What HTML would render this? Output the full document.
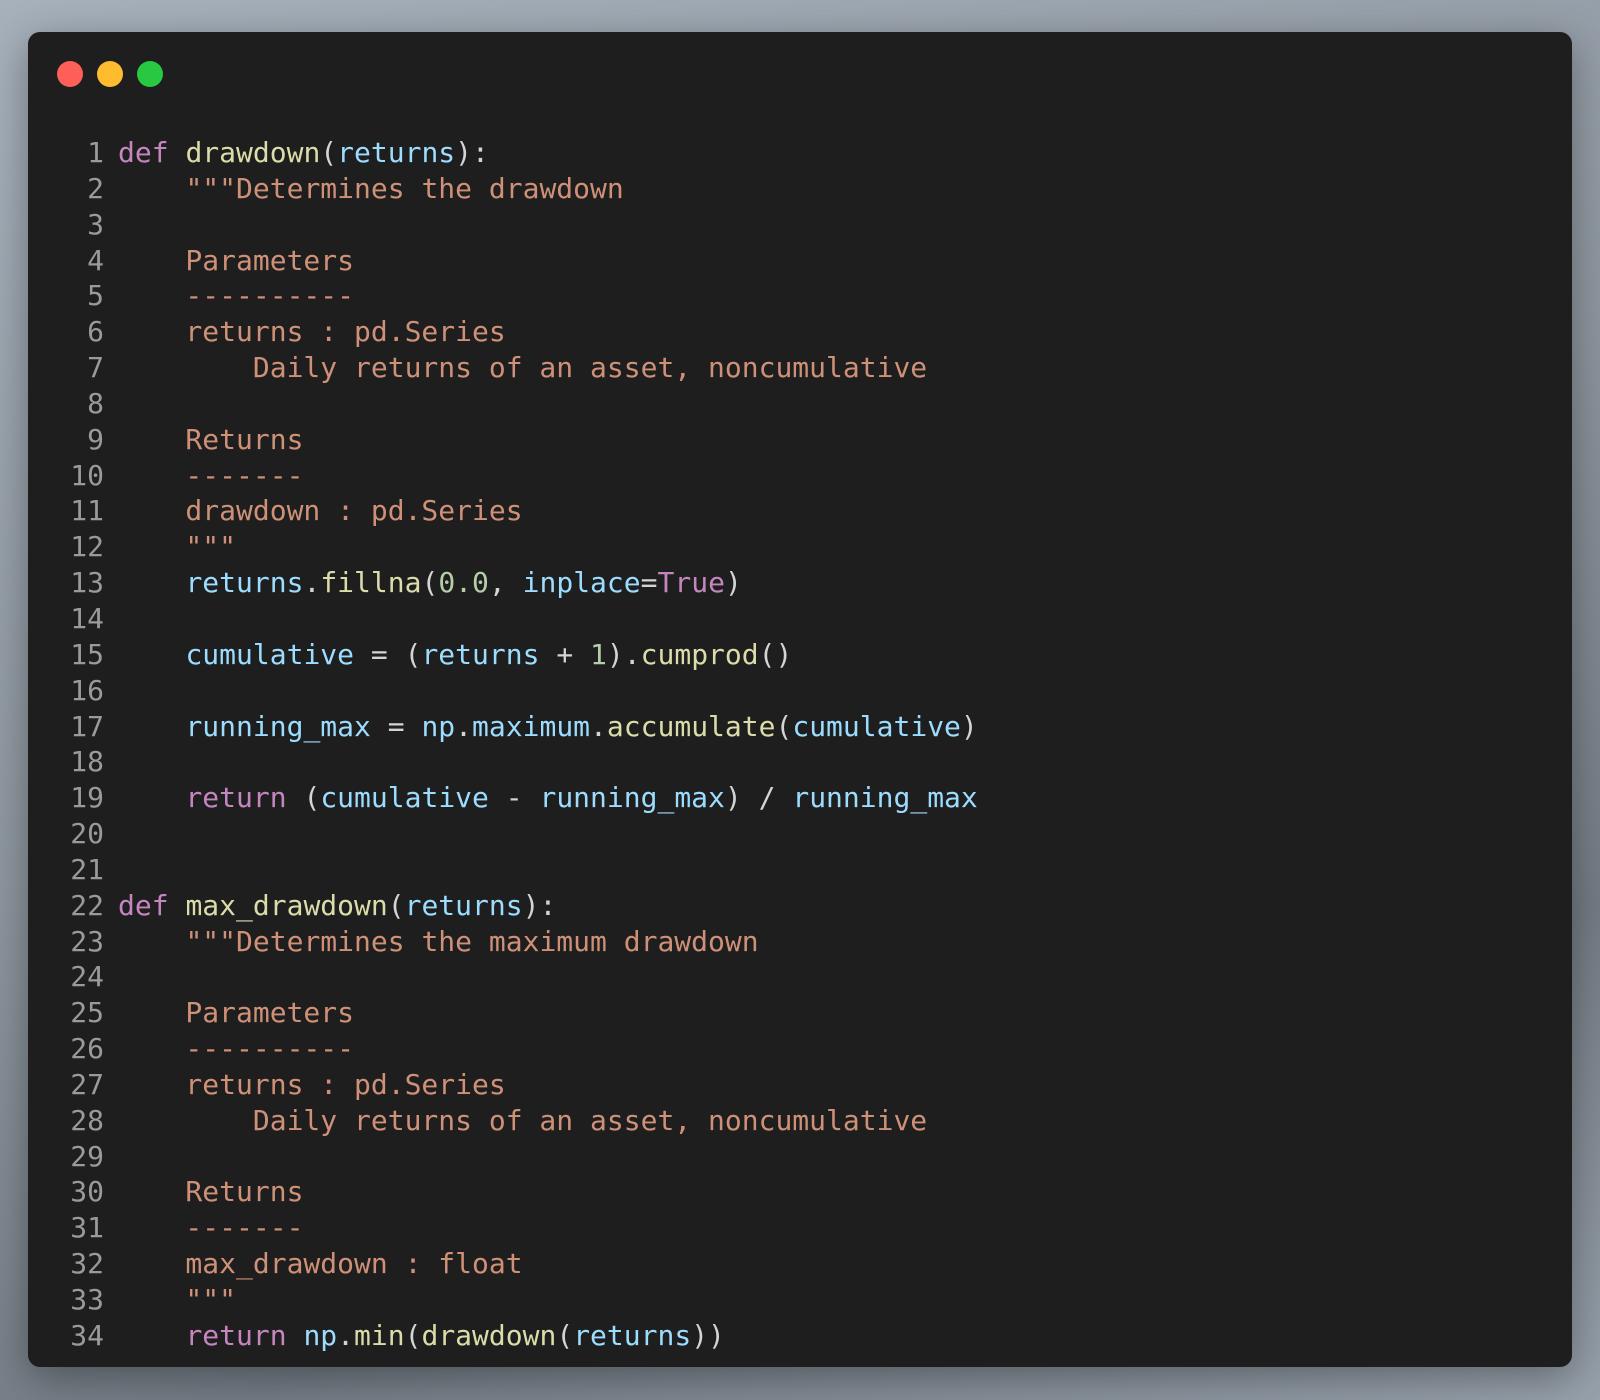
<!DOCTYPE html>
<html><head><style>
html,body{margin:0;padding:0;width:1600px;height:1400px;overflow:hidden;}
body{background:linear-gradient(160deg,#a7b1bb 0%,#8d969f 45%,#737b84 75%,#97a1ab 100%);position:relative;}
.win{position:absolute;left:28px;top:32px;width:1544px;height:1335px;background:#1e1e1e;border-radius:12px;box-shadow:0 10px 40px rgba(0,0,0,.35);}
.dot{position:absolute;top:61px;width:26px;height:26px;border-radius:50%;}
pre{position:absolute;left:0;top:135px;margin:0;font-family:"DejaVu Sans Mono","Liberation Mono",monospace;font-size:28px;line-height:35.85px;color:#d4d4d4;}
.n{display:inline-block;width:104px;text-align:right;color:#9a9a9a;margin-right:14px;}
.k{color:#c586c0}.f{color:#dcdcaa}.v{color:#9cdcfe}.s{color:#ce9178}.m{color:#b5cea8}
</style></head><body>
<div class="win"></div>
<div class="dot" style="left:57px;background:#fe5f57"></div>
<div class="dot" style="left:97px;background:#febc2e"></div>
<div class="dot" style="left:137px;background:#28c840"></div>
<pre><span class="n">1</span><span class="k">def</span> <span class="f">drawdown</span>(<span class="v">returns</span>):
<span class="n">2</span>    <span class="s">"""Determines the drawdown</span>
<span class="n">3</span>
<span class="n">4</span><span class="s">    Parameters</span>
<span class="n">5</span><span class="s">    ----------</span>
<span class="n">6</span><span class="s">    returns : pd.Series</span>
<span class="n">7</span><span class="s">        Daily returns of an asset, noncumulative</span>
<span class="n">8</span>
<span class="n">9</span><span class="s">    Returns</span>
<span class="n">10</span><span class="s">    -------</span>
<span class="n">11</span><span class="s">    drawdown : pd.Series</span>
<span class="n">12</span><span class="s">    """</span>
<span class="n">13</span>    <span class="v">returns</span>.<span class="f">fillna</span>(<span class="m">0.0</span>, <span class="v">inplace</span>=<span class="k">True</span>)
<span class="n">14</span>
<span class="n">15</span>    <span class="v">cumulative</span> = (<span class="v">returns</span> + <span class="m">1</span>).<span class="f">cumprod</span>()
<span class="n">16</span>
<span class="n">17</span>    <span class="v">running_max</span> = <span class="v">np</span>.<span class="v">maximum</span>.<span class="f">accumulate</span>(<span class="v">cumulative</span>)
<span class="n">18</span>
<span class="n">19</span>    <span class="k">return</span> (<span class="v">cumulative</span> - <span class="v">running_max</span>) / <span class="v">running_max</span>
<span class="n">20</span>
<span class="n">21</span>
<span class="n">22</span><span class="k">def</span> <span class="f">max_drawdown</span>(<span class="v">returns</span>):
<span class="n">23</span>    <span class="s">"""Determines the maximum drawdown</span>
<span class="n">24</span>
<span class="n">25</span><span class="s">    Parameters</span>
<span class="n">26</span><span class="s">    ----------</span>
<span class="n">27</span><span class="s">    returns : pd.Series</span>
<span class="n">28</span><span class="s">        Daily returns of an asset, noncumulative</span>
<span class="n">29</span>
<span class="n">30</span><span class="s">    Returns</span>
<span class="n">31</span><span class="s">    -------</span>
<span class="n">32</span><span class="s">    max_drawdown : float</span>
<span class="n">33</span><span class="s">    """</span>
<span class="n">34</span>    <span class="k">return</span> <span class="v">np</span>.<span class="f">min</span>(<span class="f">drawdown</span>(<span class="v">returns</span>))</pre>
</body></html>
